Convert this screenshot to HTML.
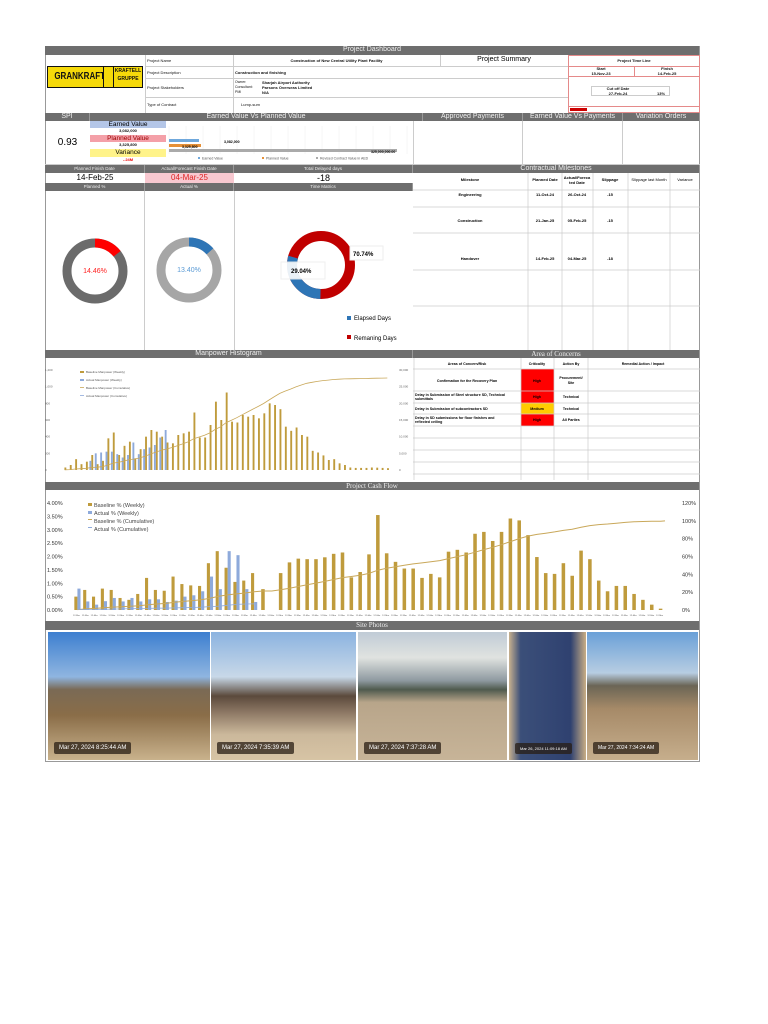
<!DOCTYPE html>
<html><head><meta charset="utf-8">
<style>
*{margin:0;padding:0;box-sizing:border-box}
body{width:768px;height:1024px;background:#fff;position:relative;font-family:"Liberation Sans",sans-serif;overflow:hidden}
.a{position:absolute}
.h{position:absolute;background:#6e6e6e;color:#eee;font-size:7px;text-align:center;line-height:8px;border-right:1px solid #999}
.t{position:absolute;font-size:4px;line-height:5px;color:#111}
.c{text-align:center}
.b{font-weight:bold}
.ph{position:absolute;overflow:hidden}
.ph span{position:absolute;left:6px;bottom:6px;background:rgba(40,30,20,.75);color:#fff;font-size:6px;padding:3px 5px;border-radius:2px}
</style></head><body>
<div class="a" style="left:45px;top:46px;width:655px;height:716px;border:1px solid #999"></div>
<div class="h" style="left:45px;top:46px;width:655px;height:9px">Project Dashboard</div>
<div class="a" style="left:47px;top:66px;width:96px;height:22px;background:#111"></div>
<div class="a" style="left:48px;top:67px;width:55px;height:20px;background:#f5d90a;color:#111;font-weight:bold;font-size:10px;line-height:20px;text-align:center;overflow:hidden"><span style="display:inline-block;transform:scaleX(0.8);transform-origin:center">GRANKRAFT</span></div>
<div class="a" style="left:104px;top:67px;width:9px;height:20px;background:#f5d90a"></div>
<div class="a" style="left:114px;top:67px;width:28px;height:20px;background:#f5d90a;color:#111;font-weight:bold;font-size:5px;line-height:8px;text-align:center">KRAFTELL<br>GRUPPE</div>
<div class="a" style="left:145px;top:55px;width:1px;height:58px;background:#ccc"></div>
<div class="a" style="left:233px;top:55px;width:1px;height:58px;background:#ccc"></div>
<div class="a" style="left:145px;top:66px;width:423px;height:1px;background:#ccc"></div>
<div class="a" style="left:145px;top:78px;width:423px;height:1px;background:#ccc"></div>
<div class="a" style="left:145px;top:97px;width:423px;height:1px;background:#ccc"></div>
<div class="a" style="left:440px;top:55px;width:1px;height:12px;background:#ccc"></div>
<div class="t" style="left:147px;top:58px">Project Name</div>
<div class="t" style="left:147px;top:70px">Project Description</div>
<div class="t" style="left:147px;top:85px">Project Stakeholders</div>
<div class="t" style="left:147px;top:102px">Type of Contract</div>
<div class="t b c" style="left:233px;top:58px;width:207px">Construction of New Central Utility Plant Facility</div>
<div class="a c" style="left:440px;top:56px;width:128px;font-size:7px">Project Summary</div>
<div class="t b" style="left:235px;top:70px">Construction and finishing</div>
<div class="t" style="left:235px;top:80px;font-size:3.5px;line-height:5px">Owner:<br>Consultant:<br>PMI</div>
<div class="t b" style="left:262px;top:80px;line-height:5px">Sharjah Airport Authority<br>Parsons Overseas Limited<br>N/A</div>
<div class="t" style="left:241px;top:102px">Lump-sum</div>
<div class="a" style="left:568px;top:55px;width:132px;height:58px;border:1px solid #e58a8a"></div>
<div class="t b c" style="left:568px;top:58px;width:132px">Project Time Line</div>
<div class="a" style="left:568px;top:66px;width:132px;height:1px;background:#e58a8a"></div>
<div class="a" style="left:568px;top:76px;width:132px;height:1px;background:#e58a8a"></div>
<div class="a" style="left:634px;top:66px;width:1px;height:10px;background:#e58a8a"></div>
<div class="t b c" style="left:568px;top:66px;width:66px;line-height:5px">Start<br>15-Nov-23</div>
<div class="t b c" style="left:634px;top:66px;width:66px;line-height:5px">Finish<br>14-Feb-25</div>
<div class="a" style="left:591px;top:86px;width:79px;height:10px;border:1px solid #ccc"></div>
<div class="t b c" style="left:591px;top:86px;width:54px;line-height:5px">Cut off Date<br>27-Feb-24</div>
<div class="t b" style="left:657px;top:91px">13%</div>
<div class="a" style="left:568px;top:106px;width:132px;height:1px;background:#e58a8a"></div>
<div class="a" style="left:570px;top:108px;width:17px;height:3px;background:#c00"></div>
<div class="h" style="left:45px;top:113px;width:45px;height:8px">SPI</div>
<div class="h" style="left:90px;top:113px;width:333px;height:8px">Earned Value Vs Planned Value</div>
<div class="h" style="left:423px;top:113px;width:100px;height:8px">Approved Payments</div>
<div class="h" style="left:523px;top:113px;width:100px;height:8px">Earned Value Vs Payments</div>
<div class="h" style="left:623px;top:113px;width:77px;height:8px">Variation Orders</div>
<div class="a" style="left:45px;top:121px;width:655px;height:44px;border-bottom:1px solid #ccc"></div>
<div class="a" style="left:522px;top:121px;width:1px;height:44px;background:#ccc"></div>
<div class="a" style="left:622px;top:121px;width:1px;height:44px;background:#ccc"></div>
<div class="a" style="left:413px;top:121px;width:1px;height:44px;background:#ccc"></div>
<div class="a c" style="left:45px;top:137px;width:45px;font-size:10px">0.93</div>
<div class="a c" style="left:90px;top:121px;width:76px;height:7px;background:#b4c6e7;font-size:6.5px;line-height:7px">Earned Value</div>
<div class="t b c" style="left:90px;top:128px;width:76px">3,082,000</div>
<div class="a c" style="left:90px;top:135px;width:76px;height:7px;background:#f4a0a8;font-size:6.5px;line-height:7px;color:#900">Planned Value</div>
<div class="t b c" style="left:90px;top:142px;width:76px">3,325,800</div>
<div class="a c" style="left:90px;top:149px;width:76px;height:8px;background:#fff38a;font-size:6.5px;line-height:8px">Variance</div>
<div class="t b c" style="left:90px;top:157px;width:76px;color:#e00">-.24M</div>
<svg class="a" style="left:166px;top:122px" width="250" height="42">
<g stroke="#eee" stroke-width="0.5"><path d="M3 4V32M20 4V32M37 4V32M54 4V32M71 4V32M88 4V32M105 4V32M122 4V32M139 4V32M156 4V32M173 4V32M190 4V32M207 4V32M224 4V32M241 4V32"/></g>
<rect x="3" y="17" width="30" height="3" fill="#6fa8dc"/>
<rect x="3" y="22" width="32" height="3" fill="#e69138"/>
<rect x="3" y="27" width="228" height="3" fill="#aaa"/>
<text x="58" y="21" font-size="3.5" font-weight="bold" font-family="Liberation Sans">3,082,000</text>
<text x="16" y="26" font-size="3.5" font-weight="bold" font-family="Liberation Sans">3,325,800</text>
<text x="205" y="31" font-size="3.5" font-weight="bold" font-family="Liberation Sans">325,000,000.00</text>
<rect x="32" y="35" width="2" height="2" fill="#6fa8dc"/><text x="36" y="37.5" font-size="3.5" font-family="Liberation Sans" fill="#555">Earned Value</text>
<rect x="96" y="35" width="2" height="2" fill="#e69138"/><text x="100" y="37.5" font-size="3.5" font-family="Liberation Sans" fill="#555">Planned Value</text>
<rect x="150" y="35" width="2" height="2" fill="#aaa"/><text x="154" y="37.5" font-size="3.5" font-family="Liberation Sans" fill="#555">Revised Contract Value in AED</text>
</svg>
<div class="h" style="left:45px;top:165px;width:100px;height:8px;font-size:4.5px">Planned Finish Date</div>
<div class="h" style="left:145px;top:165px;width:89px;height:8px;font-size:4.5px">Actual/Forecast Finish Date</div>
<div class="h" style="left:234px;top:165px;width:179px;height:8px;font-size:4.5px">Total Delayed days</div>
<div class="h" style="left:413px;top:165px;width:287px;height:8px">Contractual Milestones</div>
<div class="a c" style="left:45px;top:173px;width:100px;height:10px;font-size:8px;line-height:10px">14-Feb-25</div>
<div class="a c" style="left:145px;top:173px;width:89px;height:10px;font-size:8px;line-height:10px;background:#f8c8d0;color:#d22">04-Mar-25</div>
<div class="a c" style="left:234px;top:173px;width:179px;height:10px;font-size:9px;line-height:10px">-18</div>
<div class="h" style="left:45px;top:183px;width:100px;height:8px;font-size:4.5px">Planned %</div>
<div class="h" style="left:145px;top:183px;width:89px;height:8px;font-size:4.5px">Actual %</div>
<div class="h" style="left:234px;top:183px;width:179px;height:8px;font-size:4.5px">Time Matrics</div>
<div class="a" style="left:144px;top:191px;width:1px;height:159px;background:#ccc"></div>
<div class="a" style="left:234px;top:191px;width:1px;height:159px;background:#ccc"></div>
<svg class="a" style="left:45px;top:191px" width="368" height="159" font-family="Liberation Sans">
<circle cx="50" cy="80" r="28" fill="none" stroke="#6b6b6b" stroke-width="9"/>
<circle cx="50" cy="80" r="28" fill="none" stroke="#f00" stroke-width="9" stroke-dasharray="25.4 200" transform="rotate(-90 50 80)"/>
<text x="50" y="82" font-size="7" fill="#f22" text-anchor="middle">14.46%</text>
<circle cx="144" cy="79" r="28" fill="none" stroke="#a6a6a6" stroke-width="9"/>
<circle cx="144" cy="79" r="28" fill="none" stroke="#2e75b6" stroke-width="9" stroke-dasharray="23.6 200" transform="rotate(-90 144 79)"/>
<text x="144" y="81" font-size="7" fill="#5b9bd5" text-anchor="middle">13.40%</text>
<circle cx="276" cy="74" r="29" fill="none" stroke="#c00000" stroke-width="10"/>
<circle cx="276" cy="74" r="29" fill="none" stroke="#2e75b6" stroke-width="10" stroke-dasharray="53 200" transform="rotate(91 276 74)"/>
<rect x="305" y="55" width="33" height="14" fill="#fff" stroke="#eee"/><text x="308" y="65" font-size="6" font-weight="bold">70.74%</text>
<rect x="236" y="71" width="44" height="17" fill="#fff" stroke="#eee" opacity=".9"/><text x="246" y="82" font-size="6" font-weight="bold">29.04%</text>
<rect x="302" y="125" width="4" height="4" fill="#2e75b6"/><text x="309" y="129" font-size="6">Elapsed Days</text>
<rect x="302" y="144" width="4" height="4" fill="#c00000"/><text x="309" y="149" font-size="6">Remaning Days</text>
</svg>
<svg class="a" style="left:413px;top:173px" width="287" height="177" font-family="Liberation Sans" font-size="4">
<g stroke="#ccc" stroke-width="0.7"><path d="M115 0V177M149 0V177M180 0V177M215 0V177M257 0V177M0 17H287M0 34H287M0 60H287M0 97H287M0 133H287"/></g>
<g font-weight="bold" text-anchor="middle">
<text x="57" y="8">Milestone</text><text x="132" y="8">Planned Date</text><text x="164" y="6">Actual/Foreca</text><text x="164" y="11">ted Date</text><text x="197" y="8">Slippage</text>
<text x="57" y="23">Engineering</text><text x="132" y="23">11-Oct-24</text><text x="164" y="23">26-Oct-24</text><text x="197" y="23">-15</text>
<text x="57" y="49">Construction</text><text x="132" y="49">21-Jan-25</text><text x="164" y="49">05-Feb-25</text><text x="197" y="49">-15</text>
<text x="57" y="87">Handover</text><text x="132" y="87">14-Feb-25</text><text x="164" y="87">04-Mar-25</text><text x="197" y="87">-18</text>
</g>
<text x="236" y="8" text-anchor="middle">Slippage last Month</text><text x="272" y="8" text-anchor="middle">Variance</text>
</svg>
<div class="h" style="left:45px;top:350px;width:368px;height:8px">Manpower Histogram</div>
<div class="h" style="left:413px;top:350px;width:287px;height:8px;font-family:'Liberation Serif',serif">Area of Concerns</div>
<svg id="hist" class="a" style="left:45px;top:358px" width="368" height="122" font-family="Liberation Sans"></svg>
<svg class="a" style="left:413px;top:358px" width="287" height="122" font-family="Liberation Sans" font-size="3.6">
<rect x="108" y="11" width="33" height="22" fill="#f00"/><rect x="108" y="33" width="33" height="12" fill="#f00"/><rect x="108" y="45" width="33" height="11" fill="#fc0"/><rect x="108" y="56" width="33" height="12" fill="#f00"/>
<g stroke="#ccc" stroke-width="0.7"><path d="M1 0V122M108 0V122M141 0V122M175 0V122M0 11H287M0 33H287M0 45H287M0 56H287M0 68H287M0 80H287M0 92H287M0 104H287M0 116H287"/></g>
<g font-weight="bold"><text x="54" y="7" text-anchor="middle">Areas of Concern/Risk</text><text x="124" y="7" text-anchor="middle">Criticality</text><text x="158" y="7" text-anchor="middle">Action By</text><text x="230" y="7" text-anchor="middle">Remedial Action / Impact</text>
<text x="54" y="24" text-anchor="middle">Confirmation for the Recovery Plan</text>
<text x="2" y="38">Delay in Submission of Steel structure SD, Technical</text><text x="2" y="42">submittals</text>
<text x="2" y="52">Delay in Submission of subcontractors SD</text>
<text x="2" y="61">Delay in SD submissions for floor finishes and</text><text x="2" y="65">reflected ceiling</text>
<g text-anchor="middle"><text x="124" y="24">High</text><text x="124" y="40">High</text><text x="124" y="52">Medium</text><text x="124" y="63">High</text>
<text x="158" y="21">Procurement/</text><text x="158" y="26">Site</text><text x="158" y="40">Technical</text><text x="158" y="52">Technical</text><text x="158" y="63">All Parties</text></g></g>
</svg>
<div class="h" style="left:45px;top:482px;width:655px;height:8px;font-family:'Liberation Serif',serif">Project Cash Flow</div>
<svg id="cash" class="a" style="left:45px;top:490px" width="655" height="130" font-family="Liberation Sans"></svg>
<div class="h" style="left:45px;top:621px;width:655px;height:9px;font-family:'Liberation Serif',serif">Site Photos</div>
<div class="ph" style="left:48px;top:632px;width:162px;height:128px;background:linear-gradient(#3d7fd0 0%,#8fb5e0 35%,#7a6a55 45%,#8a6d48 65%,#c9b28c 100%)"><span>Mar 27, 2024 8:25:44 AM</span></div>
<div class="ph" style="left:211px;top:632px;width:145px;height:128px;background:linear-gradient(#8bb3e0 0%,#c8d8e8 35%,#5b4a3c 50%,#8a7562 62%,#cbb89b 80%,#d7c4a5 100%)"><span>Mar 27, 2024 7:35:39 AM</span></div>
<div class="ph" style="left:358px;top:632px;width:149px;height:128px;background:linear-gradient(#c0cbd6 0%,#e0e3e0 20%,#8e99a0 38%,#4f5a4e 45%,#b8a58a 55%,#c7b498 100%)"><span>Mar 27, 2024 7:37:28 AM</span></div>
<div class="ph" style="left:509px;top:632px;width:77px;height:128px;background:linear-gradient(90deg,#c7b08e 0%,#3b4f79 15%,#2f4170 80%,#c9ae85 100%)"><span style="font-size:4px">Mar 26, 2024 11:09:18 AM</span></div>
<div class="ph" style="left:587px;top:632px;width:111px;height:128px;background:linear-gradient(#6aa0d8 0%,#b7cde2 32%,#6b6555 42%,#a68a68 60%,#c6ae8c 100%)"><span style="font-size:5px">Mar 27, 2024 7:34:24 AM</span></div>
<script>
var NS="http://www.w3.org/2000/svg";
function el(p,t,a,tx){var e=document.createElementNS(NS,t);for(var k in a)e.setAttribute(k,a[k]);if(tx!=null)e.textContent=tx;p.appendChild(e);return e;}
(function(){var s=document.getElementById("hist");
var x0=17,x1=345,y0=112,y1=12;
var ly=["1,200","1,000","800","600","400","200","0"],ry=["30,000","25,000","20,000","15,000","10,000","5,000","0"];
for(var i=0;i<7;i++){var y=y1+i*(y0-y1)/6;el(s,"text",{x:0,y:y+1,"font-size":3,fill:"#666"},ly[i]);el(s,"text",{x:354,y:y+1,"font-size":3,fill:"#666"},ry[i]);}
var b=[30,60,130,70,100,180,70,110,380,450,180,290,340,140,250,400,480,460,400,330,320,420,440,460,690,390,390,540,820,600,930,580,570,660,640,660,620,680,800,780,730,520,470,510,420,400,230,210,175,120,130,80,60,30,25,25,25,30,28,25,22];
var a=[0,0,0,0,0,110,200,210,220,220,190,150,180,330,190,250,270,300,390,480,0];
var n=b.length,w=(x1-x0)/n;var cum=0,tot=0;b.forEach(function(v){tot+=v});var pts=[];
for(var i=0;i<n;i++){var h=b[i]/1200*(y0-y1);el(s,"rect",{x:x0+i*w+w*0.45,y:y0-h,width:w*0.35,height:h,fill:"#bf9b3c"});
if(i<a.length&&a[i]){var ha=a[i]/1200*(y0-y1);el(s,"rect",{x:x0+i*w+w*0.1,y:y0-ha,width:w*0.35,height:ha,fill:"#8eaadb"});}
cum+=b[i];pts.push((x0+i*w+w/2).toFixed(1)+","+(y0-cum/tot*0.92*(y0-y1)).toFixed(1));}
el(s,"polyline",{points:pts.join(" "),fill:"none",stroke:"#c9a85a","stroke-width":0.8});
var lg=["Baseline Manpower (Weekly)","Actual Manpower (Weekly)","Baseline Manpower (Cumulative)","Actual Manpower (Cumulative)"],lc=["#bf9b3c","#8eaadb","#c9a85a","#8eaadb"];
for(var i=0;i<4;i++){el(s,"rect",{x:35,y:13+i*8,width:4,height:i<2?2:0.8,fill:lc[i]});el(s,"text",{x:41,y:15+i*8,"font-size":3,fill:"#555"},lg[i]);}
})();
(function(){var s=document.getElementById("cash");
var x0=28,x1=620,y0=120,y1=13;
var ly=["4.00%","3.50%","3.00%","2.50%","2.00%","1.50%","1.00%","0.50%","0.00%"];
for(var i=0;i<9;i++){var y=y1+i*(y0-y1)/8;el(s,"text",{x:2,y:y+2,"font-size":5.5,fill:"#333"},ly[i]);}
var ry=["120%","100%","80%","60%","40%","20%","0%"];
for(var i=0;i<7;i++){var y=y1+i*(y0-y1)/6;el(s,"text",{x:637,y:y+2,"font-size":5.5,fill:"#333"},ry[i]);}
var b=[0.5,0.75,0.5,0.8,0.75,0.45,0.38,0.6,1.2,0.75,0.72,1.25,0.97,0.92,0.9,1.75,2.2,1.58,1.05,1.1,1.38,0.78,0,1.38,1.78,1.92,1.9,1.9,1.97,2.1,2.15,1.22,1.42,2.08,3.55,2.12,1.8,1.55,1.55,1.2,1.35,1.22,2.18,2.25,2.15,2.85,2.92,2.58,2.92,3.42,3.35,2.8,1.98,1.38,1.35,1.75,1.28,2.22,1.9,1.1,0.7,0.9,0.9,0.6,0.38,0.2,0.05];
var a=[0.8,0.32,0.2,0.33,0.45,0.32,0.45,0.32,0.4,0.4,0.3,0.35,0.5,0.55,0.7,1.25,0.78,2.2,2.05,0.78,0.3];
var n=b.length,w=(x1-x0)/n,cum=0,pts=[],pa=[],ca=0;
for(var i=0;i<n;i++){var h=b[i]/4*(y0-y1);var bx=x0+i*w;
if(i<a.length){el(s,"rect",{x:bx+w*0.15,y:y0-h,width:w*0.35,height:h,fill:"#bf9b3c"});var ha=a[i]/4*(y0-y1);el(s,"rect",{x:bx+w*0.5,y:y0-ha,width:w*0.35,height:ha,fill:"#8eaadb"});}
else el(s,"rect",{x:bx+w*0.3,y:y0-h,width:w*0.4,height:h,fill:"#bf9b3c"});
cum+=b[i];pts.push((bx+w/2).toFixed(1)+","+(y0-cum/100*(y0-y1)*0.833).toFixed(1));
if(i<a.length){ca+=a[i]*0.5;pa.push((bx+w/2).toFixed(1)+","+(y0-ca/120*(y0-y1)).toFixed(1));}}
pts.push(x1+","+(y0-0.833*(y0-y1)));
el(s,"polyline",{points:pts.join(" "),fill:"none",stroke:"#c9a85a","stroke-width":1});
el(s,"polyline",{points:pa.join(" "),fill:"none",stroke:"#8eaadb","stroke-width":0.8});
var lg=["Baseline % (Weekly)","Actual % (Weekly)","Baseline % (Cumulative)","Actual % (Cumulative)"],lc=["#bf9b3c","#8eaadb","#c9a85a","#8eaadb"];
for(var i=0;i<4;i++){el(s,"rect",{x:43,y:13+i*8,width:4,height:i<2?3:1,fill:lc[i]});el(s,"text",{x:49,y:17+i*8,"font-size":5.5,fill:"#444"},lg[i]);}
for(var i=0;i<n;i++)el(s,"text",{x:x0+i*w,y:y0+6,"font-size":2.2,fill:"#555"},"12-Mar");
})();
</script>
</body></html>
